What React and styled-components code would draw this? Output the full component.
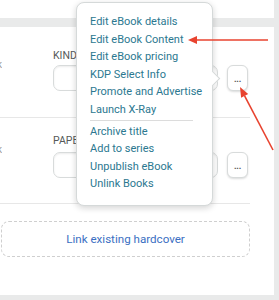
import React from "react";
import styled, { createGlobalStyle } from "styled-components";

const Global = createGlobalStyle`
  html, body { margin: 0; padding: 0; background: #e9eaea; }
  body { font-family: Roboto, "Noto Sans", sans-serif; }
`;

const Page = styled.div`
  position: relative;
  width: 279px;
  height: 300px;
  overflow: hidden;
  background: #e9eaea;
`;

const TopCard = styled.div`
  width: 274px;
  height: 18px;
  background: #fff;
`;

const Card = styled.div`
  margin-top: 9px;
  width: 274px;
  height: 268px;
  background: #fff;
  padding-right: 24px;
  box-sizing: border-box;
  display: flex;
  flex-direction: column;
`;

const Row = styled.div`
  display: flex;
  align-items: flex-start;
  padding: ${(p) => p.$top}px 2px ${(p) => p.$bottom}px 0;
  border-bottom: 1px solid #e7e7e7;
`;

const LeftCol = styled.div`
  width: 53px;
  flex: none;
  padding-top: ${(p) => p.$offset}px;
`;

const Clip = styled.div`
  width: 2px;
  overflow: hidden;
  display: flex;
  justify-content: flex-end;
  white-space: nowrap;
  font-size: 10px;
  line-height: 12px;
  color: #9a9a9a;
`;

const Field = styled.div`
  flex: 1;
  display: flex;
  flex-direction: column;
  gap: ${(p) => p.$gap}px;
`;

const Label = styled.div`
  font-size: 10.5px;
  line-height: 12px;
  color: #565959;
  white-space: nowrap;
`;

const Controls = styled.div`
  display: flex;
  gap: 9px;
`;

const Input = styled.div`
  flex: 1;
  height: 26px;
  box-sizing: border-box;
  border: 1px solid #d8dbdb;
  border-radius: 7px;
  background: #fff;
  box-shadow: 0 1px 2px rgba(15, 17, 17, 0.08) inset;
`;

const MoreButton = styled.div`
  width: 21px;
  height: 26px;
  box-sizing: border-box;
  border: 1px solid #d8dbdb;
  border-radius: 6px;
  background: #fff;
  box-shadow: 0 1px 2px rgba(15, 17, 17, 0.15);
  display: flex;
  align-items: center;
  justify-content: center;
  padding-top: 2px;
  font-size: 9px;
  font-weight: 700;
  letter-spacing: -0.3px;
  color: #555;
  line-height: 1;
`;

const LinkBox = styled.div`
  margin: 17px 0 0 1px;
  height: 36px;
  box-sizing: border-box;
  border: 1px dashed #cfcfcf;
  border-radius: 8px;
  display: flex;
  align-items: center;
  justify-content: center;
  font-size: 11.6px;
  color: #3a6fc2;
`;

const Menu = styled.div`
  position: absolute;
  left: 76px;
  top: 2px;
  width: 137px;
  box-sizing: border-box;
  background: #fff;
  border: 1px solid #d5d9d9;
  border-radius: 8px;
  box-shadow: 0 2px 6px rgba(15, 17, 17, 0.18);
  padding: 10px 8px 12px 13px;
  z-index: 2;
`;

const MenuArrow = styled.div`
  position: absolute;
  right: -6px;
  top: 70px;
  width: 10px;
  height: 10px;
  background: #fff;
  border-top: 1px solid #d5d9d9;
  border-right: 1px solid #d5d9d9;
  transform: rotate(45deg);
`;

const MenuItem = styled.div`
  font-size: 11px;
  line-height: 17.5px;
  color: #2b7890;
  white-space: nowrap;
`;

const MenuDivider = styled.div`
  height: 1px;
  background: #dcdcdc;
  margin: 1.5px 11px 2px 0;
`;

const Overlay = styled.svg`
  position: absolute;
  left: 0;
  top: 0;
  width: 279px;
  height: 300px;
  pointer-events: none;
  z-index: 5;
`;

const menuTop = [
  "Edit eBook details",
  "Edit eBook Content",
  "Edit eBook pricing",
  "KDP Select Info",
  "Promote and Advertise",
  "Launch X-Ray",
];
const menuBottom = ["Archive title", "Add to series", "Unpublish eBook", "Unlink Books"];

function FormatRow({ label, left, top, bottom, gap, offset }) {
  return (
    <Row $top={top} $bottom={bottom}>
      <LeftCol $offset={offset}>
        <Clip>{left}</Clip>
      </LeftCol>
      <Field $gap={gap}>
        <Label>{label}</Label>
        <Controls>
          <Input />
          <MoreButton>...</MoreButton>
        </Controls>
      </Field>
    </Row>
  );
}

export default function App() {
  return (
    <>
      <Global />
      <Page>
        <TopCard />
        <Card>
          <FormatRow label="KINDLE EBOOK" left="eBook" top={23} bottom={26} gap={3} offset={9} />
          <FormatRow label="PAPERBACK" left="Paperback" top={17} bottom={25} gap={5} offset={9} />
          <LinkBox>Link existing hardcover</LinkBox>
        </Card>
        <Menu>
          <MenuArrow />
          {menuTop.map((t) => (
            <MenuItem key={t}>{t}</MenuItem>
          ))}
          <MenuDivider />
          {menuBottom.map((t) => (
            <MenuItem key={t}>{t}</MenuItem>
          ))}
        </Menu>
        <Overlay viewBox="0 0 279 300">
          <line x1="268" y1="40" x2="196" y2="40" stroke="#e8432f" strokeWidth="1.6" />
          <polygon points="188,40 197,36 197,44" fill="#e8432f" />
          <line x1="273" y1="150" x2="244.6" y2="95.9" stroke="#e8432f" strokeWidth="1.6" />
          <polygon points="240,87 248.2,94 241.1,97.7" fill="#e8432f" />
        </Overlay>
      </Page>
    </>
  );
}
